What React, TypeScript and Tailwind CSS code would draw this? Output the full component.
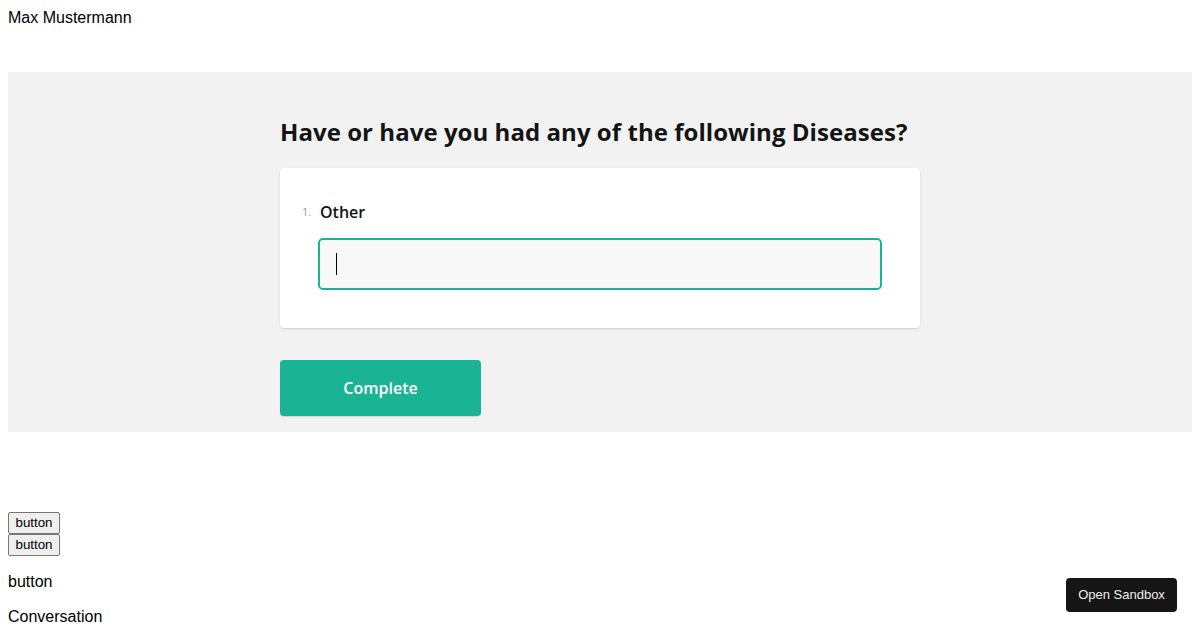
export default function App() {
  const sans = { fontFamily: '"Liberation Sans", Arial, sans-serif' };
  const open = { fontFamily: '"Open Sans", "Noto Sans", sans-serif' };

  return (
    <div className="p-2 min-h-[630px] bg-white text-black" style={sans}>
      <div className="text-base leading-[20px]">Max Mustermann</div>

      <div className="mt-[44px] h-[360px] bg-[#f2f2f2] flex justify-center pt-[44px]">
        <div className="w-[640px]" style={open}>
          <h1 className="text-[24px] leading-[32px] font-bold tracking-[0.05px] text-[#141414]">
            Have or have you had any of the following Diseases?
          </h1>

          <div className="mt-5 h-[160px] bg-white rounded-[4px] shadow-[0_1px_2px_rgba(0,0,0,0.15)] pt-8">
            <div className="flex items-center pl-[22px] h-6">
              <span className="w-[18px] text-[11px] text-[#999]">1.</span>
              <span className="text-base font-semibold text-[#141414]">Other</span>
            </div>
            <div className="mx-[38px] mt-[14px] h-[52px] rounded-[5px] border-2 border-[#1ab394] bg-[#f8f8f8] flex items-center pl-4">
              <span className="w-px h-[22px] bg-black" />
            </div>
          </div>

          <button className="mt-8 w-[201px] h-[56px] rounded-[4px] bg-[#1ab394] text-white text-base font-semibold shadow-[0_1px_1px_rgba(0,0,0,0.12)]">
            Complete
          </button>
        </div>
      </div>

      <div className="mt-[80px] flex flex-col items-start">
        <button className="w-[52px] h-[22px] text-[13.33px] leading-none border border-[#767676] rounded-[2px] bg-[#efefef]">
          button
        </button>
        <button className="w-[52px] h-[22px] text-[13.33px] leading-none border border-[#767676] rounded-[2px] bg-[#efefef]">
          button
        </button>
      </div>

      <p className="mt-4 text-base leading-[19px]">button</p>
      <p className="mt-4 text-base leading-[19px]">Conversation</p>

      <button className="fixed right-[23px] bottom-[18px] w-[111px] h-[34px] rounded-[4px] bg-[#151515] text-[#eee] text-[13px]">
        Open Sandbox
      </button>
    </div>
  );
}
